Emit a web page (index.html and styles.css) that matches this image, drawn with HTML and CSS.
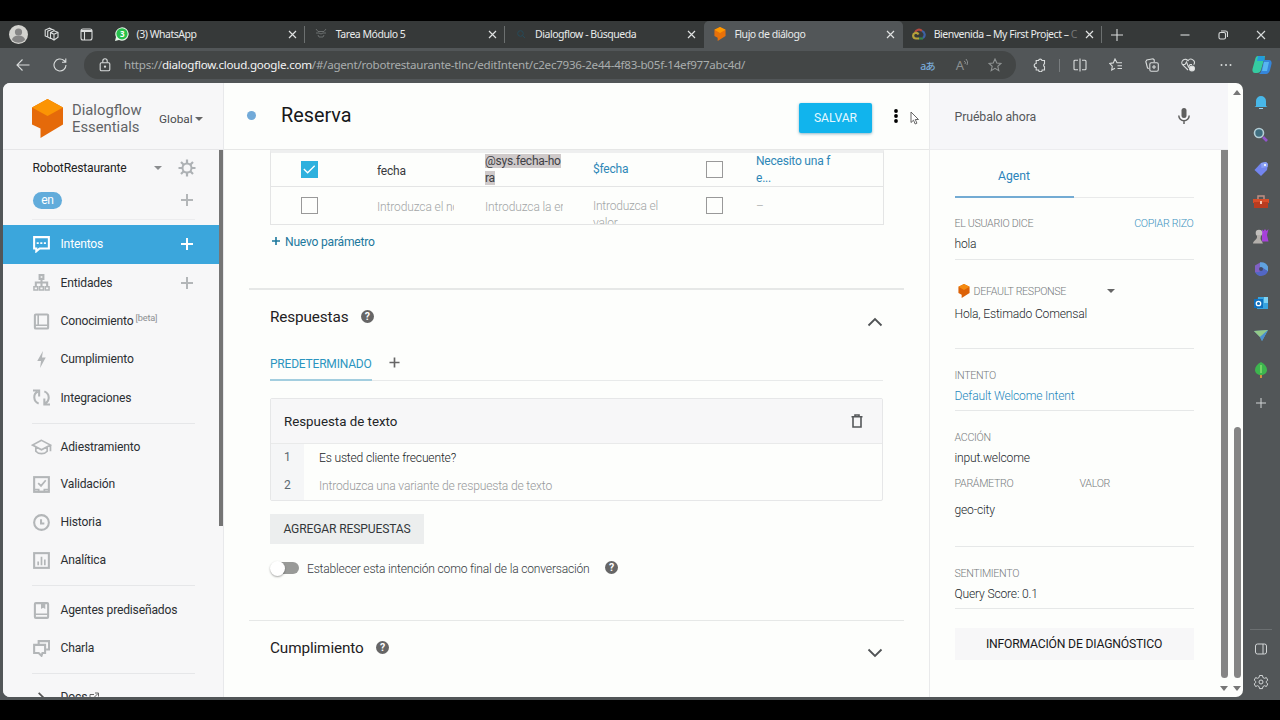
FILE: index.html
```
<!DOCTYPE html>
<html lang="es">
<head>
    <meta charset="UTF-8">
    <title>Flujo de diálogo</title>
    <link rel="stylesheet" href="styles.css">
</head>
<body>
<div class="browser">

    <!-- Tabs -->
    <div class="tabbar">
        <div class="tabbar-tools">
            <span class="avatar"><svg width="19" height="19" viewBox="0 0 19 19"><circle cx="9.500" cy="9.500" r="9.500" fill="#d3d3cf"/><circle cx="9.500" cy="7" r="3.600" fill="#858585"/><path d="M3 15a6.500 4.500 0 0 1 13 0a9 9 0 0 1-13 0z" fill="#858585"/></svg></span>
            <svg class="line" width="15" height="15" viewBox="0 0 15 15"><path d="M6.500 5.500l3.500-1.700 4 1.500v5l-4 2.700-3.500-2zM6.500 5.500L10 7.300l4-2M10 7.300V13M6.500 11.500L3.700 10V4.200L8 2.300l2 .8V4M3.700 10L1.200 9V3L5.500 1.200l2 .9"/></svg>
            <svg class="line" width="13" height="13" viewBox="0 0 13 13"><rect x="1" y="1" width="11" height="11" rx="2"/><path d="M1 3.500h11M1 2.500h11M4.500 4v8"/></svg>
        </div>
        <div class="tab">
            <span class="favicon"><svg width="14" height="14" viewBox="0 0 14 14"><path d="M0 14l1-4A6.700 6.700 0 1 1 4 13z" fill="#e5f5e8"/><circle cx="7" cy="6.800" r="5.600" fill="#27c14c"/></svg><b class="count">3</b></span>
            <span class="tab-title">(3) WhatsApp</span>
            <svg class="close" viewBox="0 0 9 9"><path d="M1 1l7 7M8 1L1 8"/></svg>
        </div>
        <div class="tab">
            <span class="favicon"><svg width="12" height="12" viewBox="0 0 12 12" fill="none" stroke="#707474"><path d="M1 1l2 2.500h6L11 1M1 5h3l2 1 2-1h3M3 7l1 2h4l1-2" stroke-width=".9"/></svg></span>
            <span class="tab-title">Tarea Módulo 5</span>
            <svg class="close" viewBox="0 0 9 9"><path d="M1 1l7 7M8 1L1 8"/></svg>
        </div>
        <div class="tab no-line">
            <span class="favicon"><svg width="10" height="10" viewBox="0 0 10 10" fill="none" stroke="#264a59"><circle cx="4.500" cy="4.500" r="2.800"/><path d="M6.500 6.500L9 9"/></svg></span>
            <span class="tab-title">Dialogflow - Búsqueda</span>
            <svg class="close" viewBox="0 0 9 9"><path d="M1 1l7 7M8 1L1 8"/></svg>
        </div>
        <div class="tab active no-line">
            <span class="favicon"><svg width="12" height="14" viewBox="0 0 31 39"><path d="M15.500 0L31 8v17L9 39v-9L0 25V8z" fill="#e8710a"/><path d="M15.500 0L31 8l-15.500 9L0 8z" fill="#ff9800"/></svg></span>
            <span class="tab-title">Flujo de diálogo</span>
            <svg class="close" viewBox="0 0 9 9"><path d="M1 1l7 7M8 1L1 8"/></svg>
        </div>
        <div class="tab">
            <span class="favicon"><svg width="14" height="12" viewBox="0 0 14 12" fill="none" stroke-width="2.200"><path d="M3 4.500A4.200 4.200 0 0 1 10 3" stroke="#b34a42"/><path d="M10 3a4 4 0 0 1 1 7" stroke="#3e62a5"/><path d="M11 10.500H6.500" stroke="#377f4c"/><path d="M7 10.500H4A2.800 2.800 0 1 1 6.500 6.500" stroke="#b5a13a"/></svg></span>
            <span class="tab-title">Bienvenida – My First Project – <i>C</i></span>
            <svg class="close" viewBox="0 0 9 9"><path d="M1 1l7 7M8 1L1 8"/></svg>
        </div>
        <svg class="line new-tab" width="12" height="12" viewBox="0 0 12 12"><path d="M6 0v12M0 6h12"/></svg>
        <div class="window-buttons">
            <svg class="line" width="10" height="10" viewBox="0 0 10 10"><path d="M.500 5h9"/></svg>
            <svg class="line" width="10" height="10" viewBox="0 0 10 10"><rect x="1" y="2.500" width="6.500" height="6.500" rx="1.500"/><path d="M3 1h4.500a2 2 0 0 1 2 2v4"/></svg>
            <svg class="line" width="10" height="10" viewBox="0 0 10 10"><path d="M1 1l8 8M9 1L1 9"/></svg>
        </div>
    </div>

    <!-- Address bar -->
    <div class="toolbar">
        <div class="nav-buttons">
            <svg class="line" width="14" height="14" viewBox="0 0 14 14"><path d="M13.500 7H1M6.500 1.500L1 7l5.500 5.500"/></svg>
            <svg class="line" width="14" height="14" viewBox="0 0 14 14"><path d="M13 7a6 6 0 1 1-2-4.500L12.700 4M12.800.500V4.200H9"/></svg>
        </div>
        <div class="address">
            <svg class="line" width="12" height="14" viewBox="0 0 12 14"><rect x="1.200" y="4.700" width="9.600" height="8" rx="1.200"/><path d="M3.800 4.500V3a2.200 2.200 0 0 1 4.400 0v1.500"/><circle cx="6" cy="8.700" r=".6"/></svg>
            <span class="url">https://<b>dialogflow.cloud.google.com</b>/#/agent/robotrestaurante-tlnc/editIntent/c2ec7936-2e44-4f83-b05f-14ef977abc4d/</span>
            <div class="address-actions">
                <span class="translate">aあ</span>
                <span class="read">A<svg width="5" height="9" viewBox="0 0 5 9"><path d="M0 3a2 2 0 0 1 1 3M2 1a5 5 0 0 1 1 6"/></svg></span>
                <svg class="line dim" width="14" height="14" viewBox="0 0 14 14"><path d="M7 1l1.800 4 4.200.4-3.200 2.900 1 4.400L7 10.400l-3.800 2.300 1-4.400L1 5.400 5.200 5z"/></svg>
            </div>
        </div>
        <div class="extensions">
            <svg class="line" width="14" height="14" viewBox="0 0 14 14"><path d="M4 2.500h1.500a1.800 1.800 0 0 1 3.500 0h2.500V5.700a1.700 1.700 0 0 0 0 3V12H9.200a1.800 1.800 0 0 1-3.600 0H3.200V9.500a2 2 0 1 1 0-4V2.500z"/></svg>
            <i class="split-line"></i>
            <svg class="line" width="14" height="14" viewBox="0 0 14 14"><path d="M5 2.200H2a1 1 0 0 0-1 1v7.600a1 1 0 0 0 1 1h3M9 2.200h3a1 1 0 0 1 1 1v7.600a1 1 0 0 1-1 1H9M7 .500v13"/></svg>
            <svg class="line" width="14" height="14" viewBox="0 0 14 14"><path d="M13 4.800H8L6 1 4.300 4.900.700 5.400l2.600 2.700-.6 4L6 10.300M8.500 7.800H13M8.500 10.500H13"/></svg>
            <svg class="line" width="14" height="14" viewBox="0 0 14 14"><rect x="4.800" y="4.800" width="8.500" height="8.500" rx="1.500"/><path d="M9 7v4M7 9h4M3.800 10.500L2.500 10 .800 3.500 1.800 2 8 .800l1.200 1V4"/></svg>
            <svg class="line" width="14" height="14" viewBox="0 0 14 14"><path d="M7 12L1.500 6.700a3.300 3.300 0 0 1 5.500-4 3.300 3.300 0 0 1 5.700 4M2 6.500h2L5.500 4l2 5L9 6.500h2"/><circle cx="11" cy="10.500" r="2.500" fill="#e8e8e8"/></svg>
            <svg class="dots" width="12" height="4" viewBox="0 0 12 4" fill="#d9dcdc"><circle cx="1.500" cy="2" r="1"/><circle cx="6" cy="2" r="1"/><circle cx="10.500" cy="2" r="1"/></svg>
            <svg width="20" height="18" viewBox="0 0 20 18"><path d="M6 0h7l-4 14c-.5 2-2 3-4 3H3c-2 0-3-2-2.500-4L3 4c.5-2 1-4 3-4z" fill="#35cba1"/><path d="M6 0h5c2 0 2 3 1.500 5H5z" fill="#229bdc"/><path d="M13 4h4c2 0 3 2 2.500 4L18 14c-.5 2-2 4-4 4H7c2-1 2-3 3-6l1-4c.5-3 1-4 2-4z" fill="#3586db"/><path d="M12 6h5l-2 9h-5z" fill="#57b6f2"/></svg>
        </div>
    </div>

    <div class="window">
        <div class="page">

            <!-- Left menu -->
            <aside class="sidebar">
                <div class="brand">
                    <svg width="31" height="39" viewBox="0 0 31 39"><path d="M15.500 0L31 8.500v17L8.500 39v-9.500L0 25.500v-17z" fill="#e56a0a"/><path d="M15.500 0L31 8.500 15.500 17 0 8.500z" fill="#fb9404"/></svg>
                    <div class="brand-name"><span>Dialogflow</span><span>Essentials</span></div>
                    <span class="region">Global</span><i class="caret"></i>
                </div>
                <div class="menu">
                    <div class="agent-row">
                        <span class="agent-name">RobotRestaurante</span><i class="caret"></i>
                        <svg width="18" height="18" viewBox="0 0 18 18" fill="none" stroke="#adb1b4"><circle cx="9" cy="9" r="4.500" stroke-width="2"/><path d="M9 .500v4M9 13.500v4M.500 9h4M13.500 9h4M3 3l2.700 2.700M12.300 12.300L15 15M15 3l-2.700 2.700M5.700 12.300L3 15" stroke-width="2.200"/></svg>
                    </div>
                    <div class="lang-row"><span class="lang">en</span><svg class="plus" viewBox="0 0 12 12"><path d="M6 0v12M0 6h12"/></svg></div>
                    <div class="menu-group">
                        <a class="item current"><svg class="ico" viewBox="0 0 18 18"><path d="M1.200 1.200h15.600v12H7l-3.500 3v-3H1.200z"/><path d="M5 6.500v2M8.800 6.500v2M12.600 6.500v2"/></svg><span>Intentos</span><svg class="plus" viewBox="0 0 12 12"><path d="M6 0v12M0 6h12"/></svg></a>
                        <a class="item"><svg class="ico" viewBox="0 0 18 18"><path d="M7 1.200h4v4H7zM9 5v8M3 13V9h12v4"/><path d="M1 13.500h4v3.500H1zM7 13.500h4v3.500H7zM13 13.500h4v3.500h-4z" stroke-width="1.600"/></svg><span>Entidades</span><svg class="plus" viewBox="0 0 12 12"><path d="M6 0v12M0 6h12"/></svg></a>
                        <a class="item"><svg class="ico" viewBox="0 0 18 18"><rect x="2" y="1.500" width="14" height="15" rx="1"/><path d="M5.500 1.500v11M2 13h14" stroke-width="1.700"/></svg><span>Conocimiento</span><small>[beta]</small></a>
                        <a class="item"><svg class="ico" viewBox="0 0 18 18"><path d="M10.500 0L4.500 10.500h4L7.500 18l6-11H9.500z" fill="#b3b6b8" stroke="none"/></svg><span>Cumplimiento</span></a>
                        <a class="item"><svg class="ico" viewBox="0 0 18 18"><path d="M6 15.500C0 13 0 5 5 3M0 1.500h6.500V8M12 2.500c6 2.500 6 10 1 12.500M18 16.500h-6V10"/></svg><span>Integraciones</span></a>
                    </div>
                    <div class="menu-group second">
                        <a class="item"><svg class="ico cap" viewBox="0 0 22 18"><path d="M11 2.500L1.500 7.500l9.500 5 9.500-5zM20.500 7.500V14M5 10v4c3 3.500 9 3.500 12 0v-4"/></svg><span>Adiestramiento</span></a>
                        <a class="item"><svg class="ico" viewBox="0 0 18 18"><rect x="1.200" y="1.200" width="15.600" height="15.600"/><path d="M5.500 7.500l3 3 5-6M1 14.500h5v2h6v-2h5" stroke-width="1.800"/></svg><span>Validación</span></a>
                        <a class="item"><svg class="ico" viewBox="0 0 18 18"><circle cx="9" cy="9" r="7.800"/><path d="M8.500 5.500V10H12"/></svg><span>Historia</span></a>
                        <a class="item"><svg class="ico" viewBox="0 0 18 18"><rect x="1.200" y="1.200" width="15.600" height="15.600"/><path d="M5.500 14V10M9 14V5M12.500 14V8" stroke-width="1.800"/></svg><span>Analítica</span></a>
                    </div>
                    <div class="menu-group third">
                        <a class="item"><svg class="ico" viewBox="0 0 18 18"><rect x="2" y="1.200" width="14" height="15.600" rx="1"/><path d="M2 13h14" stroke-width="1.600"/><path d="M8.500 2v5.500l2.200-1.500L13 7.500V2z" fill="#b3b6b8" stroke="none"/></svg><span>Agentes prediseñados</span></a>
                        <a class="item"><svg class="ico" viewBox="0 0 18 18"><path d="M6 5V1.200h11V10h-3M1.200 5.200h11.600v8.500H10l-1 3-3-3H1.200z"/></svg><span>Charla</span></a>
                    </div>
                    <div class="menu-group docs">
                        <a class="item"><svg class="ico arrow" viewBox="0 0 18 18"><path d="M6 4l6 6-6 6"/></svg><span>Docs</span><svg class="ext" width="10" height="10" viewBox="0 0 10 10"><path d="M5 2.500H1V9h7V5.500M4.500 6L9 1.500M6 1h3.500v3.500"/></svg></a>
                    </div>
                </div>
            </aside>

            <!-- Intent editor -->
            <main class="editor">
                <header class="editor-head">
                    <i class="dot"></i>
                    <h1>Reserva</h1>
                    <button class="save">SALVAR</button>
                    <svg class="more" width="4" height="14" viewBox="0 0 4 14"><circle cx="2" cy="2" r="1.900"/><circle cx="2" cy="7" r="1.900"/><circle cx="2" cy="12" r="1.900"/></svg>
                    <svg class="cursor" width="9" height="14" viewBox="0 0 9 14"><path d="M1 1v10.500l2.500-2.300 1.700 3.800 1.700-.8L5.300 8.500h3.200z"/></svg>
                </header>
                <div class="editor-body">
                    <div class="params">
                        <div class="param">
                            <span class="check on"><svg viewBox="0 0 18 18"><path d="M3 8.500l4 4L14.500 5"/></svg></span>
                            <span class="p-name">fecha</span>
                            <span class="p-type"><mark>@sys.fecha-ho<br>ra</mark></span>
                            <span class="p-value">$fecha</span>
                            <span class="check"></span>
                            <span class="p-prompt">Necesito una f<br>e...</span>
                        </div>
                        <div class="param blank">
                            <span class="check"></span>
                            <span class="p-name">Introduzca el nombre</span>
                            <span class="p-type">Introduzca la entidad</span>
                            <span class="p-value">Introduzca el valor</span>
                            <span class="check"></span>
                            <span class="p-prompt">–</span>
                        </div>
                    </div>
                    <div class="new-param"><svg viewBox="0 0 8 8"><path d="M4 0v8M0 4h8"/></svg>Nuevo parámetro</div>

                    <section class="section">
                        <div class="section-head">
                            <h2>Respuestas</h2><span class="help">?</span>
                            <svg class="chevron" width="16" height="10" viewBox="0 0 16 10"><path d="M1.500 8.500L8 2l6.500 6.500"/></svg>
                        </div>
                        <div class="platforms"><span class="platform">PREDETERMINADO</span><svg viewBox="0 0 12 12"><path d="M6 .500v11M.500 6h11"/></svg></div>
                        <div class="card">
                            <div class="card-head"><span>Respuesta de texto</span>
                                <svg width="12" height="14" viewBox="0 0 12 14"><path d="M2 3.500v9.500h8V3.500M.500 2.800h11M4 2V1h4v1"/></svg>
                            </div>
                            <div class="variant"><b>1</b><span>Es usted cliente frecuente?</span></div>
                            <div class="variant empty"><b>2</b><span>Introduzca una variante de respuesta de texto</span></div>
                        </div>
                        <button class="add">AGREGAR RESPUESTAS</button>
                        <div class="final"><span class="toggle"></span><span class="final-text">Establecer esta intención como final de la conversación</span><span class="help">?</span></div>
                    </section>

                    <section class="section last">
                        <div class="section-head">
                            <h2>Cumplimiento</h2><span class="help">?</span>
                            <svg class="chevron" width="16" height="10" viewBox="0 0 16 10"><path d="M1.500 1.500L8 8l6.500-6.500"/></svg>
                        </div>
                    </section>
                </div>
            </main>

            <!-- Test console -->
            <aside class="console">
                <div class="try"><span>Pruébalo ahora</span>
                    <svg width="12" height="17" viewBox="0 0 12 17"><rect x="3.500" y="0" width="5" height="10" rx="2.500" fill="#606060"/><path d="M.800 7.500a5.200 5.200 0 0 0 10.400 0M6 12.500V16" fill="none" stroke="#606060" stroke-width="1.500"/></svg>
                </div>
                <div class="console-main">
                    <div class="results">
                        <div class="result-tabs"><span class="result-tab">Agent</span></div>
                        <div class="field">
                            <div class="labels"><span>EL USUARIO DICE</span><a class="copy">COPIAR RIZO</a></div>
                            <div class="value">hola</div>
                        </div>
                        <div class="field response">
                            <div class="labels"><svg width="12" height="14" viewBox="0 0 31 39"><path d="M15.500 0L31 8v17L9 39v-9L0 25V8z" fill="#dc6208"/><path d="M15.500 0L31 8l-15.500 9L0 8z" fill="#f58b10"/></svg><span>DEFAULT RESPONSE</span><i class="caret"></i></div>
                            <div class="value">Hola, Estimado Comensal</div>
                        </div>
                        <div class="field">
                            <div class="labels"><span>INTENTO</span></div>
                            <div class="value link">Default Welcome Intent</div>
                        </div>
                        <div class="field action">
                            <div class="labels"><span>ACCIÓN</span></div>
                            <div class="value">input.welcome</div>
                            <div class="labels cols"><span>PARÁMETRO</span><span>VALOR</span></div>
                            <div class="value geo">geo-city</div>
                        </div>
                        <div class="field">
                            <div class="labels"><span>SENTIMIENTO</span></div>
                            <div class="value">Query Score: 0.1</div>
                        </div>
                        <button class="diagnostic">INFORMACIÓN DE DIAGNÓSTICO</button>
                    </div>
                    <div class="scroll inner"><i class="thumb"></i><i class="down"></i></div>
                </div>
            </aside>
            <div class="scroll outer"><i class="up"></i><i class="thumb"></i><i class="down"></i></div>
        </div>

        <!-- Edge sidebar -->
        <div class="edgebar">
            <svg viewBox="0 0 16 16"><path d="M3 12V7a5 5 0 0 1 10 0v5l1.500 1h-13z" fill="#48b7e8"/><path d="M6 14h4v1H6z" fill="#9dd5ef"/></svg>
            <svg viewBox="0 0 16 16"><circle cx="6" cy="6" r="4.500" fill="#3f6e80" stroke="#b3cdd5" stroke-width="1.600"/><path d="M10 10l4 4" stroke="#9254cc" stroke-width="2.600"/></svg>
            <svg viewBox="0 0 16 16"><path d="M8 2l5-1 2 2-1 6-6 6-6.500-6z" fill="#7385ef"/><path d="M8 2l5-1 2 2-.5 3-6 1z" fill="#8ba1f5"/><circle cx="12" cy="4" r="1.100" fill="#fff"/></svg>
            <svg viewBox="0 0 16 16"><path d="M5 5V2h6v3" fill="none" stroke="#bf8f83" stroke-width="1.500"/><path d="M0 5h16v4H0z" fill="#d94d28"/><path d="M1 8h14v6H1z" fill="#b93c20"/><path d="M7 7h2v3H7z" fill="#f5c5ae"/></svg>
            <svg viewBox="0 0 16 16"><path d="M9 1.500l1.500 1.500L12 1l1.500 2L15.500 1 14 7l1.500 6.500H9z" fill="#a641d9"/><circle cx="6" cy="5" r="3.300" fill="#c1bfbc"/><path d="M4 7h4l-.5 4 2.500 4.500H0C0 12.500 4 12 4 9z" fill="#b3afab"/></svg>
            <svg viewBox="0 0 16 16"><path d="M8 1L2 4.500v6.500l5 4 2-6z" fill="#8061c4"/><path d="M7 1.500q5-1 8 4v5l-5-3-3-1z" fill="#60a2df"/><path d="M2 11q6 1 8-4l5 3.500q-2 4-7 4.500-4 0-6-4z" fill="#5267c5"/><circle cx="8" cy="8" r="2" fill="#414b69"/></svg>
            <svg viewBox="0 0 16 16"><path d="M5 2h10v12H4z" fill="#38a3df"/><path d="M11 2h4v6h-4z" fill="#7ed2f3"/><path d="M1 4h9v9H1z" fill="#0f70bd"/><circle cx="5.500" cy="8.500" r="2.200" fill="none" stroke="#fff" stroke-width="1.300"/></svg>
            <svg viewBox="0 0 16 16"><path d="M1 3l14-1-6 11-2-4z" fill="#63a9bf"/><path d="M1 3l14-1-8 7z" fill="#93c988"/><path d="M15 2L9 13 7 9z" fill="#4b8fd0"/></svg>
            <svg viewBox="0 0 16 16"><path d="M7 10h2v6H7z" fill="#d0913e"/><path d="M8 0c4 2 6 5 6 8 0 3-3 5-6 5S2 11 2 8c0-3 2-6 6-8z" fill="#3db54e"/><path d="M8 3v8" stroke="#71d565" stroke-width="2"/></svg>
            <svg class="thin" viewBox="0 0 16 16"><path d="M8 3v10M3 8h10"/></svg>
            <div class="edge-bottom">
                <svg class="thin" viewBox="0 0 16 16"><rect x="2.500" y="3" width="11" height="10" rx="2"/><path d="M10 3v10"/></svg>
                <svg class="thin" viewBox="0 0 16 16"><circle cx="8" cy="8" r="2"/><path d="M6.500 1.500h3l.4 2 1.500.8 2-.7 1.400 2.500-1.500 1.300v1.300l1.500 1.200-1.400 2.600-2-.8-1.500.9-.4 2h-3l-.4-2-1.500-.9-2 .8-1.400-2.600 1.500-1.200V7.400L1.200 6.100l1.400-2.500 2 .7 1.500-.8z"/></svg>
            </div>
        </div>
    </div>
</div>
</body>
</html>
```
FILE: styles.css
```
* {
    box-sizing: border-box;
}
body {
    margin: 0;
    height: 720px;
    padding: 21px 0 20px;
    overflow: hidden;
    background: #000;
    color: #37393c;
    font-family: Roboto, "Liberation Sans", sans-serif;
    font-size: 12.5px;
}
svg {
    flex: none;
    display: block;
}
h1, h2 {
    margin: 0;
    font-weight: 400;
}
button {
    font-family: inherit;
    border: 0;
    padding: 0;
    white-space: nowrap;
}
.browser {
    height: 679px;
    display: flex;
    flex-direction: column;
    background: #525658;
}
.line {
    fill: none;
    stroke: #d9dcdc;
    stroke-width: 1.1;
}
.caret {
    border: 4px solid transparent;
    border-top-color: #666;
    border-bottom: 0;
}

/* tabs */
.tabbar {
    height: 27px;
    display: flex;
    align-items: center;
    background: #363939;
}
.tabbar-tools {
    width: 106px;
    display: flex;
    align-items: center;
    padding-left: 9px;
}
.tabbar-tools .line {
    margin-left: 16px;
}
.tabbar-tools .line + .line {
    margin-left: 21px;
}
.tab {
    width: 199.3px;
    height: 27px;
    display: flex;
    align-items: center;
    padding: 0 8px 1px 9px;
    color: #e9ebeb;
    font: 10.5px "Noto Sans", sans-serif;
    letter-spacing: -.47px;
    background: linear-gradient(#6c7070, #6c7070) right center / 1px 17px no-repeat;
}
.tab.no-line {
    background: none;
}
.tab.active {
    background: #525658;
    border-radius: 5px 5px 0 0;
}
.favicon {
    position: relative;
    width: 14px;
    margin-right: 7.5px;
    display: flex;
    justify-content: center;
}
.count {
    position: absolute;
    top: 1px;
    left: 5px;
    font-size: 8px;
    line-height: 11px;
    color: #fff;
}
.tab-title {
    flex: 1;
    white-space: nowrap;
}
.tab-title i {
    font-style: normal;
    color: #777;
}
.close {
    width: 9px;
    height: 9px;
    fill: none;
    stroke: #dfe1e1;
    stroke-width: 1.2;
}
.new-tab {
    margin-left: 9px;
}
.window-buttons {
    flex: 1;
    display: flex;
    justify-content: flex-end;
    gap: 28px;
    padding-right: 14px;
}

/* address bar */
.toolbar {
    height: 35px;
    display: flex;
    align-items: center;
    padding-bottom: 1px;
}
.nav-buttons {
    width: 84px;
    display: flex;
    gap: 23px;
    padding-left: 16px;
}
.address {
    width: 932px;
    height: 28px;
    display: flex;
    align-items: center;
    padding: 0 14px 0 15px;
    border-radius: 14px;
    background: #434646;
}
.url {
    margin: 0 0 1px 13px;
    color: #a9adad;
    font: 11.6px "Noto Sans", sans-serif;
    letter-spacing: -.25px;
    white-space: nowrap;
}
.url b {
    font-weight: 400;
    color: #f3f4f4;
}
.address-actions {
    margin-left: auto;
    display: flex;
    align-items: center;
    gap: 19px;
}
.translate {
    margin-right: 2px;
    color: #79a9d6;
    font: 500 10.5px "Noto Sans", "Noto Sans CJK JP", sans-serif;
    letter-spacing: -1px;
}
.read {
    display: flex;
    color: #8c9090;
    font: 13px/14px "Noto Sans", sans-serif;
}
.read svg {
    fill: none;
    stroke: #8c9090;
}
.dim {
    stroke: #8f9393;
}
.extensions {
    flex: 1;
    display: flex;
    align-items: center;
    justify-content: space-between;
    padding: 0 8px 0 17px;
}
.dots {
    margin: 0 -2px 0 2px;
}
.split-line {
    width: 1px;
    height: 13px;
    margin: 0 -10px;
    background: #797d7f;
}

/* window */
.window {
    height: 617px;
    display: flex;
    padding-left: 3px;
}
.page {
    width: 1240px;
    height: 614px;
    display: flex;
    overflow: hidden;
    border-radius: 7px;
    background: #fdfefc;
}
.edgebar {
    width: 37px;
    display: flex;
    flex-direction: column;
    align-items: center;
    gap: 17.5px;
    padding: 10.5px 1px 0 0;
}
.edgebar svg {
    width: 16px;
    height: 16px;
}
.edgebar .thin {
    fill: none;
    stroke: #d1d4d5;
    stroke-width: 1;
}
.edge-bottom {
    width: 22px;
    height: 71px;
    margin-top: auto;
    display: flex;
    flex-direction: column;
    align-items: center;
    gap: 17px;
    padding-top: 11px;
    border-top: 1px solid #6b6f71;
}

/* sidebar */
.sidebar {
    width: 221px;
    display: flex;
    flex-direction: column;
    border-right: 1px solid #e8e9eb;
    background: #f7f7f8;
}
.brand {
    height: 67px;
    display: flex;
    align-items: center;
    padding: 5px 0 0 29px;
    border-bottom: 1px solid #e6e6e8;
}
.brand-name {
    width: 72px;
    margin-left: 9px;
    margin-right: 15px;
    display: flex;
    flex-direction: column;
    font-size: 14.8px;
    line-height: 16.5px;
    color: #616366;
}
.brand .region {
    width: 36px;
    font-size: 11.8px;
    color: #4a4c4f;
}
.menu {
    flex: 1;
    min-height: 0;
    overflow: hidden;
    border-right: 4px solid #757575;
    border-image: linear-gradient(#757575 376px, transparent 376px) 1;
    font-size: 12.1px;
    letter-spacing: -.17px;
}
.agent-row {
    height: 36px;
    display: flex;
    align-items: center;
    padding-left: 29.5px;
    color: #222;
}
.agent-name {
    width: 121px;
}
.agent-row .caret {
    border-top-color: #8b8d8f;
}
.agent-row svg {
    margin-left: 16px;
}
.lang-row {
    height: 34px;
    display: flex;
    align-items: center;
    justify-content: space-between;
    padding: 0 26px 6px 30px;
    background: linear-gradient(#ececee, #ececee) 29px 100% / 163px 1px no-repeat;
}
.lang {
    width: 29px;
    height: 17px;
    border-radius: 9px;
    background: #62acdb;
    color: #fff;
    font-size: 12px;
    line-height: 17px;
    text-align: center;
}
.plus {
    width: 12px;
    height: 12px;
    fill: none;
    stroke: #b3b6b8;
    stroke-width: 2;
}
.menu-group {
    padding-top: 5px;
}
.menu-group .item {
    height: 38.4px;
    display: flex;
    align-items: center;
    padding: 0 26px 1px 29.5px;
    color: #2c2f33;
}
.menu-group .item .ico {
    width: 17px;
    height: 17px;
    margin-right: 11px;
    fill: none;
    stroke: #b3b6b8;
    stroke-width: 2.2;
}
.menu-group .item .cap {
    width: 21px;
    height: 17px;
    margin: 0 9px 0 -2px;
    stroke-width: 1.8;
}
.menu-group .item .plus {
    margin-left: auto;
}
.menu-group .current {
    height: 39px;
    background: #3ba6dc;
    color: #fff;
}
.menu-group .current .ico, .menu-group .current .plus {
    stroke: #fff;
}
.item small {
    margin: -8px 0 0 2px;
    font-size: 9.2px;
    color: #8c8f92;
}
.second, .third, .docs {
    background: linear-gradient(#e6e7e9, #e6e7e9) 29px 0 / 163px 1px no-repeat;
}
.second {
    margin-top: 5px;
}
.second .item {
    height: 37.9px;
    padding-bottom: 0;
}
.third, .docs {
    margin-top: 6px;
}
.third {
    padding-top: 6px;
}
.third .item {
    height: 38px;
    padding-bottom: 0;
}
.docs .item {
    padding-bottom: 0;
}
.docs .item .arrow {
    stroke: #555;
    stroke-width: 1.8;
}
.ext {
    margin-left: 2px;
    fill: none;
    stroke: #666;
}

/* editor */
.editor {
    width: 705px;
    display: flex;
    flex-direction: column;
}
.editor-head {
    height: 67px;
    display: flex;
    align-items: center;
    padding: 0 10px 1px 23px;
    border-bottom: 1px solid #e6e7e6;
}
.dot {
    width: 9px;
    height: 9px;
    border-radius: 50%;
    background: #72aad8;
}
.editor-head h1 {
    margin: 0 auto 0 25px;
    color: #17181a;
    font-size: 19.8px;
}
.save {
    width: 73px;
    height: 30px;
    margin-top: 5px;
    border-radius: 2px;
    background: #11b4ed;
    color: #e4f8ff;
    box-shadow: 0 1px 3px rgba(0, 90, 130, .45);
    font-size: 12.1px;
}
.more {
    margin-left: 22px;
}
.cursor {
    margin: 5px 0 0 12px;
    fill: #fff;
    stroke: #555;
    stroke-width: .9;
}
.editor-body {
    flex: 1;
    padding: 0 46px;
}
.params {
    width: 614px;
    height: 75px;
    border: 1px solid #e4e5e5;
    border-top: 3px solid #eeefef;
}
.param {
    height: 34px;
    display: flex;
    align-items: center;
    padding-left: 30px;
    line-height: 17px;
    font-size: 12px;
    letter-spacing: -.22px;
    border-bottom: 1px solid #e4e5e5;
}
.param.blank {
    height: 37px;
    border: 0;
    color: #a3a6a7;
    font-weight: 300;
    overflow: hidden;
}
.check {
    width: 17px;
    height: 17px;
    flex: none;
    border: 1px solid #999;
}
.check.on {
    border: 0;
    background: #2eb1de;
}
.check svg {
    fill: none;
    stroke: #fff;
    stroke-width: 1.4;
}
.p-name {
    width: 77px;
    margin: 3px 31px 0 59px;
    overflow: hidden;
    white-space: nowrap;
}
.p-type {
    width: 78px;
    margin: 1px 30px 0 0;
    overflow: hidden;
    white-space: nowrap;
}
.blank .p-name, .blank .p-type {
    margin-top: 3px;
    letter-spacing: -.12px;
}
.p-type mark {
    background: #cfcaca;
    color: #3f4145;
}
.p-value {
    width: 80px;
    margin-right: 33px;
    color: #2f87b7;
}
.blank .p-value {
    height: 27px;
    margin-top: 11px;
    color: inherit;
}
.p-prompt {
    margin: 1px 0 0 33px;
    color: #2f87b7;
}
.blank .p-prompt {
    color: inherit;
}
.new-param {
    height: 63px;
    display: flex;
    align-items: flex-start;
    padding: 9px 0 0 2px;
    font-size: 12.1px;
    letter-spacing: -.22px;
    line-height: 17px;
    color: #1c789c;
}
.new-param svg {
    width: 8px;
    height: 8px;
    margin: 3px 5px 0 0;
    stroke: #1c789c;
    stroke-width: 1.6;
}
.section {
    height: 332px;
    margin: 0 -21px 0 -21px;
    padding: 0 21px;
    border-top: 2px solid #e6e8e7;
}
.section-head {
    height: 53px;
    display: flex;
    align-items: center;
}
.section-head h2 {
    color: #1f2123;
    font-size: 15.3px;
    letter-spacing: -.12px;
}
.help {
    width: 13px;
    height: 13px;
    margin-left: 12.5px;
    border-radius: 50%;
    background: #666;
    color: #fff;
    font-size: 10.5px;
    font-weight: 700;
    line-height: 13px;
    text-align: center;
}
.chevron {
    margin: 11px 0 0 auto;
    fill: none;
    stroke: #505355;
    stroke-width: 1.8;
}
.last .chevron {
    margin-top: 10px;
}
.platforms {
    width: 613px;
    height: 38px;
    display: flex;
    align-items: center;
    border-bottom: 1px solid #e8eaea;
}
.platform {
    width: 102px;
    height: 38px;
    margin-top: 1px;
    color: #2b95c0;
    border-bottom: 2px solid #a3cedf;
    font-size: 12px;
    letter-spacing: -.2px;
    line-height: 43px;
}
.platforms svg {
    width: 11px;
    height: 11px;
    margin: 2px 0 0 17px;
    stroke: #666;
    stroke-width: 1.8;
}
.card {
    width: 613px;
    height: 103px;
    margin-top: 17px;
    border: 1px solid #e6e7e8;
    border-radius: 2px;
}
.card-head {
    height: 45px;
    display: flex;
    align-items: center;
    justify-content: space-between;
    padding: 0 19px 0 13px;
    border-bottom: 1px solid #e9eaea;
    background: #f7f7f8;
    color: #222527;
    font-size: 13.3px;
}
.card-head svg {
    fill: none;
    stroke: #55585a;
    stroke-width: 1.6;
}
.variant {
    display: flex;
    height: 28px;
    line-height: 28px;
    font-size: 12.1px;
}
.variant span {
    font-weight: 300;
    letter-spacing: -.18px;
    color: #202427;
}
.variant.empty span {
    color: #97999b;
}
.variant b {
    width: 33px;
    margin-right: 15px;
    background: #f5f6f7;
    color: #5b6870;
    font-weight: 400;
    line-height: 27px;
    text-align: center;
}
.add {
    display: block;
    width: 154px;
    height: 30px;
    margin-top: 13px;
    background: #eceeee;
    color: #33373a;
    font-size: 12.1px;
    letter-spacing: -.15px;
}
.final {
    height: 48px;
    display: flex;
    align-items: center;
    color: #363b42;
    font-size: 12.1px;
}
.final-text {
    width: 283px;
    margin-top: 1px;
    white-space: nowrap;
    font-weight: 300;
    letter-spacing: -.2px;
}
.toggle {
    width: 28px;
    height: 12px;
    margin: 0 8px 0 1px;
    border-radius: 6px;
    background: #999a98;
}
.toggle::before {
    content: "";
    display: block;
    width: 15px;
    height: 15px;
    margin: -1px 0 0 -1px;
    border-radius: 50%;
    background: #fff;
    box-shadow: 0 1px 2px rgba(0, 0, 0, .35);
}
.final .help {
    margin-left: 15px;
    margin-bottom: 1px;
}
.last {
    height: auto;
    border-top-width: 1px;
}

/* console */
.console {
    width: 299px;
    display: flex;
    flex-direction: column;
    border-left: 1px solid #e9eaeb;
}
.try {
    height: 67px;
    display: flex;
    align-items: center;
    justify-content: space-between;
    padding: 1px 38px 0 24.5px;
    background: #f6f6f9;
    border-bottom: 1px solid #ececef;
    color: #55575a;
    font-size: 12.3px;
    letter-spacing: -.1px;
}
.console-main {
    flex: 1;
    display: flex;
    justify-content: space-between;
}
.results {
    width: 263.5px;
    padding-left: 24.5px;
}
.result-tabs {
    height: 48px;
    border-bottom: 1px solid #e9eaea;
}
.result-tab {
    display: block;
    width: 119px;
    height: 48px;
    border-bottom: 2px solid #73abd3;
    color: #2b84bb;
    text-align: center;
    font-size: 12.2px;
    line-height: 52px;
}
.field {
    height: 62px;
    padding-top: 17px;
    border-bottom: 1px solid #e6e8e8;
}
.result-tabs + .field {
    padding-top: 16px;
}
.labels {
    height: 18px;
    display: flex;
    align-items: center;
    font-size: 10.7px;
    font-weight: 300;
    letter-spacing: -.33px;
    white-space: nowrap;
    color: #777b7d;
}
.copy {
    margin-left: auto;
    color: #3b92c0;
}
.value {
    margin-top: 1px;
    line-height: 22px;
    font-size: 12.1px;
    font-weight: 300;
    letter-spacing: -.18px;
    color: #24292d;
}
.value.link {
    color: #1f88bd;
}
.response {
    height: 89px;
    padding-top: 22px;
}
.response .labels svg {
    margin: 0 4px 0 3px;
}
.response .labels span {
    width: 91px;
}
.response .caret {
    margin-left: 42px;
}
.response .value {
    margin-top: 3px;
}
.action {
    height: 136px;
}
.cols {
    margin-top: 5px;
}
.cols span:first-child {
    width: 125px;
}
.value.geo {
    margin-top: 7px;
}
.diagnostic {
    width: 239px;
    height: 32px;
    margin-top: 19px;
    padding-bottom: 1px;
    background: #f7f7f8;
    color: #17181a;
    font-size: 12.2px;
    letter-spacing: -.2px;
}
.scroll {
    display: flex;
    flex-direction: column;
    align-items: center;
}
.scroll .thumb {
    width: 7px;
    border-radius: 4px;
    background: #858585;
}
.scroll .up, .scroll .down {
    border: 4px solid transparent;
}
.scroll .up {
    margin-bottom: 332px;
    border-top: 0;
    border-bottom: 5px solid #777;
}
.scroll .down {
    margin-top: 8px;
    border-bottom: 0;
    border-top: 5px solid #777;
}
.inner {
    width: 8px;
}
.inner .thumb {
    height: 528px;
    border-radius: 0 0 4px 4px;
}
.outer {
    width: 15px;
    padding: 7px 0 0 3px;
}
.outer .thumb {
    height: 251px;
}
```
